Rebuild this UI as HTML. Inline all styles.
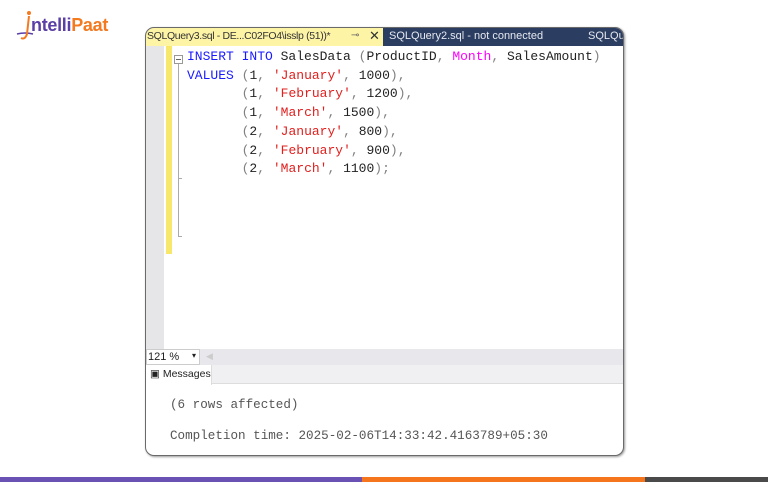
<!DOCTYPE html>
<html><head><style>
*{margin:0;padding:0;box-sizing:border-box}
body{width:768px;height:482px;background:#fff;position:relative;overflow:hidden;font-family:"Liberation Sans",sans-serif}
.abs{position:absolute}
.panel{left:145px;top:27px;width:479px;height:429px;border:1.5px solid #6a6a6a;border-radius:9px;overflow:hidden;background:#fff;box-shadow:1px 1px 2px #999}
.code{font-family:"Liberation Mono",monospace;font-size:13px;white-space:pre;line-height:18.7px;color:#222}
.k{color:#1a1aff}.s{color:#e0201e}.m{color:#ff00ff}.g{color:#808080}
.out{font-family:"Liberation Mono",monospace;font-size:12.6px;color:#555;white-space:pre}
</style></head><body>
<div class="abs" style="left:15px;top:10px;width:100px;height:34px">
<svg width="100" height="34" viewBox="0 0 100 34"><path d="M2 24 Q10 22 18 24" stroke="#5b3fa6" stroke-width="1.5" fill="none"/><path d="M14 6 L12 24 Q10 30 6 28" stroke="#f47a20" stroke-width="2" fill="none"/><circle cx="14" cy="3" r="2" fill="#f47a20"/></svg>
<div class="abs" style="left:16px;top:5px;font-size:18px;font-weight:bold;color:#5b3fa6;letter-spacing:-0.3px">ntelli<span style="color:#f47a20">Paat</span></div>
</div>
<div class="abs panel">
 <div class="abs" style="left:0;top:0;width:479px;height:18px;background:#2b3d61"></div>
 <div class="abs" style="left:0;top:0;width:237px;height:18px;background:#fdf4a6"></div>
 <div class="abs" style="left:1px;top:2px;font-size:10.5px;letter-spacing:-0.35px;color:#333;white-space:nowrap">SQLQuery3.sql - DE...C02FO4\isslp (51))*</div>
 <div class="abs" style="left:205px;top:2px;font-size:10px;color:#666">⊸</div>
 <div class="abs" style="left:223px;top:0px;font-size:13px;color:#333">✕</div>
 <div class="abs" style="left:243px;top:2px;font-size:11px;color:#e6e9f0;white-space:nowrap">SQLQuery2.sql - not connected</div>
 <div class="abs" style="left:442px;top:2px;font-size:11px;color:#e6e9f0;white-space:nowrap">SQLQu</div>
 <div class="abs" style="left:0;top:18px;width:18px;height:303px;background:#e6e6e8"></div>
 <div class="abs" style="left:20px;top:18px;width:6px;height:208px;background:#f7e86b"></div>
 <div class="abs" style="left:28px;top:27px;width:9px;height:9px;border:1px solid #999;background:#fff"></div>
 <div class="abs" style="left:30px;top:31px;width:5px;height:1px;background:#666"></div>
 <div class="abs" style="left:32px;top:36px;width:1px;height:173px;background:#aaa"></div>
 <div class="abs" style="left:32px;top:150px;width:4px;height:1px;background:#aaa"></div>
 <div class="abs" style="left:32px;top:208px;width:4px;height:1px;background:#aaa"></div>
 <div class="abs code" style="left:41px;top:20px"><span class="k">INSERT INTO</span> SalesData <span class="g">(</span>ProductID<span class="g">,</span> <span class="m">Month</span><span class="g">,</span> SalesAmount<span class="g">)</span>
<span class="k">VALUES</span> <span class="g">(</span>1<span class="g">,</span> <span class="s">'January'</span><span class="g">,</span> 1000<span class="g">),</span>
       <span class="g">(</span>1<span class="g">,</span> <span class="s">'February'</span><span class="g">,</span> 1200<span class="g">),</span>
       <span class="g">(</span>1<span class="g">,</span> <span class="s">'March'</span><span class="g">,</span> 1500<span class="g">),</span>
       <span class="g">(</span>2<span class="g">,</span> <span class="s">'January'</span><span class="g">,</span> 800<span class="g">),</span>
       <span class="g">(</span>2<span class="g">,</span> <span class="s">'February'</span><span class="g">,</span> 900<span class="g">),</span>
       <span class="g">(</span>2<span class="g">,</span> <span class="s">'March'</span><span class="g">,</span> 1100<span class="g">);</span></div>
 <div class="abs" style="left:0;top:321px;width:479px;height:16px;background:#e8e8ec"></div>
 <div class="abs" style="left:0;top:321px;width:54px;height:16px;background:#fff;border:1px solid #ccc;font-size:11px;color:#222;padding:1px 0 0 1px">121 %<span style="position:absolute;left:45px;top:1px;font-size:8px">▾</span></div>
 <div class="abs" style="left:60px;top:323px;font-size:9px;color:#ccc">◀</div>
 <div class="abs" style="left:0;top:337px;width:479px;height:19px;background:#f0f0f2;border-bottom:1px solid #ddd"></div>
 <div class="abs" style="left:0;top:337px;width:66px;height:20px;background:#fff;border-right:1px solid #ddd;font-size:10.5px;color:#222;padding:3px 0 0 4px">▣ Messages</div>
 <div class="abs out" style="left:24px;top:370px">(6 rows affected)</div>
 <div class="abs out" style="left:24px;top:401px">Completion time: 2025-02-06T14:33:42.4163789+05:30</div>
</div>
<div class="abs" style="left:0;top:477px;width:362px;height:5px;background:#6a52b5"></div>
<div class="abs" style="left:362px;top:477px;width:283px;height:5px;background:#f4751c"></div>
<div class="abs" style="left:645px;top:477px;width:123px;height:5px;background:#4a4a4a"></div>
</body></html>
